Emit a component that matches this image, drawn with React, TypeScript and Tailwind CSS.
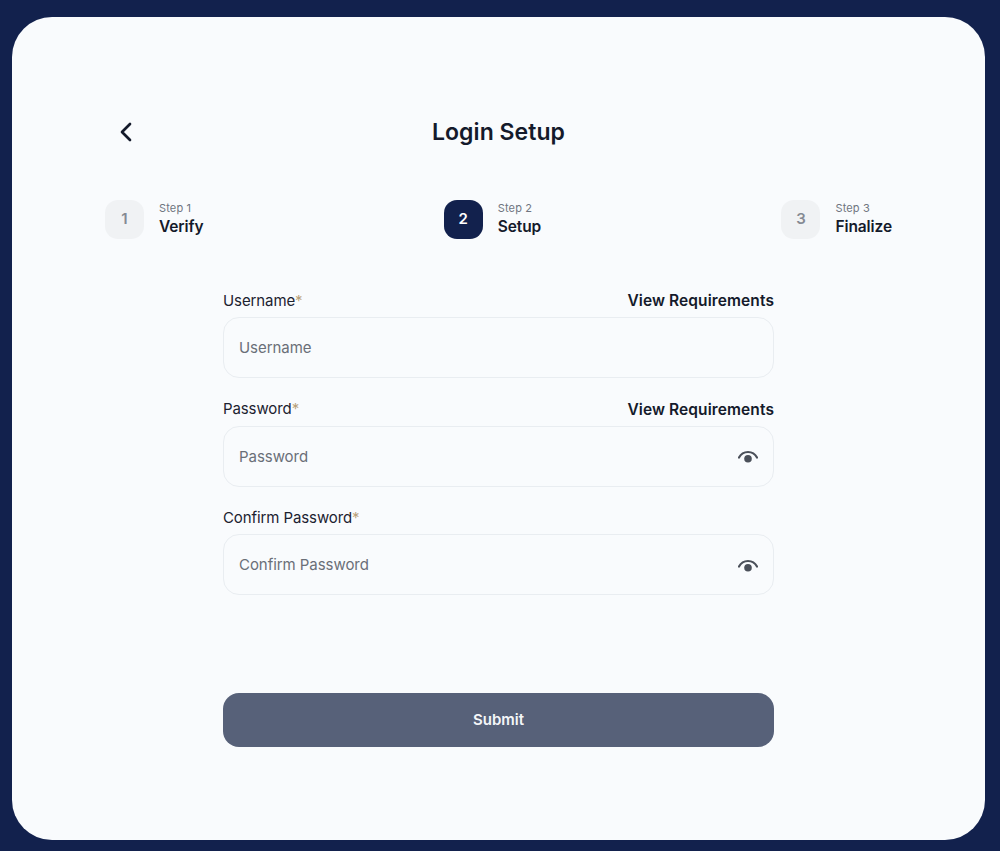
import React from "react";
import { ChevronLeft } from "lucide-react";

const font = "font-['Inter','Liberation_Sans',sans-serif]";

function Step({ n, label, active }: { n: number; label: string; active?: boolean }) {
  return (
    <div className="flex items-center gap-[15px]">
      <div
        className={
          "flex h-[39px] w-[39px] items-center justify-center rounded-[13px] text-[15px] font-semibold " +
          (active ? "bg-[#12214d] text-white" : "bg-[#f0f2f4] text-[#858a93]")
        }
      >
        {n}
      </div>
      <div className="flex flex-col">
        <span className="-mt-px text-[11px] leading-[14px] tracking-[0.15px] text-[#6f7580]">Step {n}</span>
        <span className="text-[15.5px] leading-[23px] font-semibold tracking-[-0.1px] text-[#141a2b]">{label}</span>
      </div>
    </div>
  );
}

function EyeIcon() {
  return (
    <svg width="20" height="14" viewBox="0 0 20 14" className="shrink-0">
      <path d="M1 7.5C3 3.8 6.2 2 10 2s7 1.8 9 5.5" fill="none" stroke="#4b505a" strokeWidth="2.2" strokeLinecap="round" />
      <circle cx="10" cy="8.8" r="3.8" fill="#4b505a" />
    </svg>
  );
}

function Field({ label, eye, requirements }: { label: string; eye?: boolean; requirements?: boolean }) {
  return (
    <div className="flex flex-col">
      <div className="mb-1 flex h-[24px] items-center justify-between">
        <span className="text-[15px] tracking-[-0.1px] text-[#1c2230]">
          {label}
          <span className="text-[#b9a27a]">*</span>
        </span>
        {requirements && (
          <span className="text-[15.5px] font-semibold tracking-[0.1px] text-[#141a2b]">View Requirements</span>
        )}
      </div>
      <div className="flex h-[61px] items-center justify-between rounded-[16px] border border-[#e9edf1] pt-[2px] pr-[15px] pl-[15px]">
        <span className="text-[15px] tracking-[-0.05px] text-[#6a6f78]">{label}</span>
        {eye && <EyeIcon />}
      </div>
    </div>
  );
}

export default function App() {
  return (
    <div className={"flex h-[851px] w-[1000px] bg-[#12214d] pt-[17px] pr-[15px] pb-[11px] pl-[12px] " + font}>
      <div className="flex flex-1 flex-col rounded-[40px] bg-[#f9fbfd] pt-[99px] pr-[93px] pl-[93px]">
        <div className="relative flex h-[32px] items-center justify-center">
          <ChevronLeft className="absolute top-0 left-[4.5px] h-[32px] w-[32px] text-[#141a2b]" strokeWidth={2} />
          <h1 className="text-[23px] font-semibold tracking-[0.05px] text-[#141a2b]">Login Setup</h1>
        </div>
        <div className="mt-[52px] flex items-center justify-between">
          <Step n={1} label="Verify" />
          <Step n={2} label="Setup" active />
          <Step n={3} label="Finalize" />
        </div>
        <div className="mt-[50px] flex w-[551px] flex-col gap-[19.5px] self-center">
          <Field label="Username" requirements />
          <Field label="Password" eye requirements />
          <Field label="Confirm Password" eye />
        </div>
        <button className="mt-[98px] h-[54px] w-[551px] self-center rounded-[16px] bg-[#576179] text-[15px] font-semibold tracking-[0px] text-[#f4f6f8]">
          Submit
        </button>
      </div>
    </div>
  );
}
